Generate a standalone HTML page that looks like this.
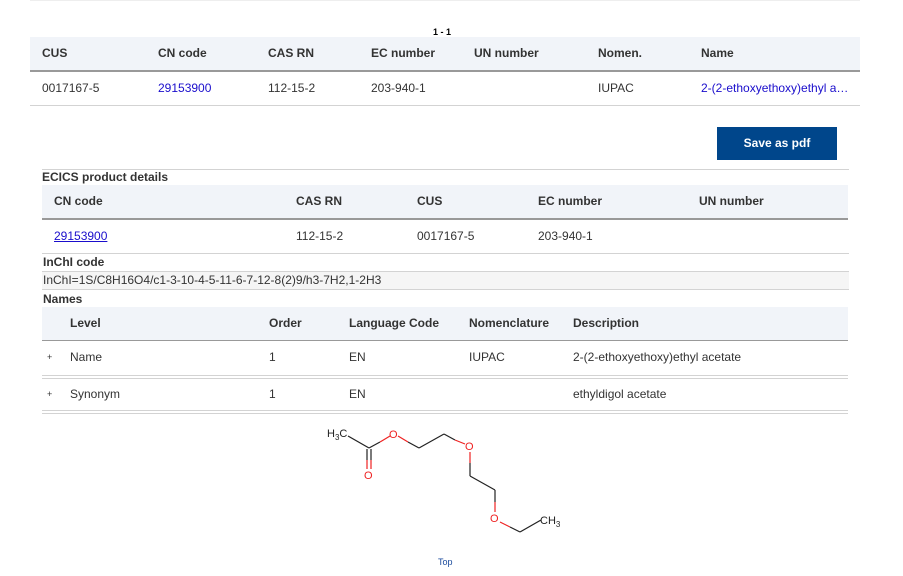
<!DOCTYPE html>
<html><head><meta charset="utf-8"><style>
*{margin:0;padding:0;box-sizing:border-box}
body{width:903px;height:576px;background:#fff;font-family:"Liberation Sans",sans-serif;font-size:12px;color:#333;position:relative;overflow:hidden}
.a{position:absolute;white-space:nowrap;line-height:14px}
.b{font-weight:bold}
.bg{position:absolute;background:#f1f4f9}
.ln{position:absolute;height:1px;background:#d3d3d3}
.lk{color:#1a0dcc}
</style></head><body>
<div class="ln" style="left:30px;top:0;width:830px;background:#eee"></div>
<div class="a b" style="left:433px;top:25px;font-size:9px;color:#000">1 - 1</div>
<div class="bg" style="left:30px;top:37px;width:830px;height:33px"></div>
<div class="ln" style="left:30px;top:70px;width:830px;height:2px;background:#999"></div>
<div class="a b" style="left:42px;top:46px">CUS</div>
<div class="a b" style="left:158px;top:46px">CN code</div>
<div class="a b" style="left:268px;top:46px">CAS RN</div>
<div class="a b" style="left:371px;top:46px">EC number</div>
<div class="a b" style="left:474px;top:46px">UN number</div>
<div class="a b" style="left:598px;top:46px">Nomen.</div>
<div class="a b" style="left:701px;top:46px">Name</div>
<div class="a" style="left:42px;top:81px">0017167-5</div>
<div class="a lk" style="left:158px;top:81px">29153900</div>
<div class="a" style="left:268px;top:81px">112-15-2</div>
<div class="a" style="left:371px;top:81px">203-940-1</div>
<div class="a" style="left:598px;top:81px">IUPAC</div>
<div class="a lk" style="left:701px;top:81px">2-(2-ethoxyethoxy)ethyl a…</div>
<div class="ln" style="left:30px;top:105px;width:830px"></div>
<div class="a b" style="left:717px;top:127px;width:120px;height:33px;background:#00468b;color:#fff;text-align:center;line-height:33px">Save as pdf</div>
<div class="ln" style="left:42px;top:169px;width:807px"></div>
<div class="a b" style="left:42px;top:170px">ECICS product details</div>
<div class="bg" style="left:42px;top:185px;width:806px;height:33px"></div>
<div class="ln" style="left:42px;top:218px;width:806px;height:2px;background:#999"></div>
<div class="a b" style="left:54px;top:194px">CN code</div>
<div class="a b" style="left:296px;top:194px">CAS RN</div>
<div class="a b" style="left:417px;top:194px">CUS</div>
<div class="a b" style="left:538px;top:194px">EC number</div>
<div class="a b" style="left:699px;top:194px">UN number</div>
<div class="a lk" style="left:54px;top:229px;text-decoration:underline">29153900</div>
<div class="a" style="left:296px;top:229px">112-15-2</div>
<div class="a" style="left:417px;top:229px">0017167-5</div>
<div class="a" style="left:538px;top:229px">203-940-1</div>
<div class="ln" style="left:42px;top:253px;width:807px"></div>
<div class="a b" style="left:43px;top:255px">InChI code</div>
<div class="ln" style="left:42px;top:271px;width:807px"></div>
<div style="position:absolute;left:42px;top:272px;width:807px;height:17px;background:#f5f5f5"></div>
<div class="a" style="left:43px;top:273px">InChI=1S/C8H16O4/c1-3-10-4-5-11-6-7-12-8(2)9/h3-7H2,1-2H3</div>
<div class="ln" style="left:42px;top:289px;width:807px"></div>
<div class="a b" style="left:43px;top:292px">Names</div>
<div class="bg" style="left:42px;top:307px;width:806px;height:33px"></div>
<div class="ln" style="left:42px;top:340px;width:806px;background:#999"></div>
<div class="a b" style="left:70px;top:316px">Level</div>
<div class="a b" style="left:269px;top:316px">Order</div>
<div class="a b" style="left:349px;top:316px">Language Code</div>
<div class="a b" style="left:469px;top:316px">Nomenclature</div>
<div class="a b" style="left:573px;top:316px">Description</div>
<div class="a" style="left:47px;top:350px;font-size:9px">+</div>
<div class="a" style="left:70px;top:350px">Name</div>
<div class="a" style="left:269px;top:350px">1</div>
<div class="a" style="left:349px;top:350px">EN</div>
<div class="a" style="left:469px;top:350px">IUPAC</div>
<div class="a" style="left:573px;top:350px">2-(2-ethoxyethoxy)ethyl acetate</div>
<div class="ln" style="left:42px;top:375px;width:806px"></div>
<div class="ln" style="left:42px;top:378px;width:806px"></div>
<div class="a" style="left:47px;top:387px;font-size:9px">+</div>
<div class="a" style="left:70px;top:387px">Synonym</div>
<div class="a" style="left:269px;top:387px">1</div>
<div class="a" style="left:349px;top:387px">EN</div>
<div class="a" style="left:573px;top:387px">ethyldigol acetate</div>
<div class="ln" style="left:42px;top:410px;width:806px"></div>
<div class="ln" style="left:42px;top:413px;width:806px"></div>
<svg style="position:absolute;left:0;top:0" width="903" height="576">
<g stroke-width="1.2" fill="none">
<line x1="348" y1="436" x2="369" y2="448" stroke="#222"/>
<line x1="369" y1="448" x2="380" y2="442" stroke="#222"/>
<line x1="380" y1="442" x2="390" y2="436" stroke="#e22"/>
<line x1="367" y1="449" x2="367" y2="460" stroke="#222"/><line x1="371" y1="449" x2="371" y2="460" stroke="#222"/>
<line x1="367" y1="460" x2="367" y2="469" stroke="#e22"/><line x1="371" y1="460" x2="371" y2="469" stroke="#e22"/>
<line x1="398" y1="436" x2="408" y2="442" stroke="#e22"/>
<line x1="408" y1="442" x2="419" y2="448" stroke="#222"/>
<line x1="419" y1="448" x2="444" y2="434" stroke="#222"/>
<line x1="444" y1="434" x2="455" y2="440" stroke="#222"/>
<line x1="455" y1="440" x2="465" y2="444" stroke="#e22"/>
<line x1="470" y1="452" x2="470" y2="463" stroke="#e22"/>
<line x1="470" y1="463" x2="470" y2="476" stroke="#222"/>
<line x1="470" y1="476" x2="495" y2="490" stroke="#222"/>
<line x1="495" y1="490" x2="495" y2="502" stroke="#222"/>
<line x1="495" y1="502" x2="495" y2="512" stroke="#e22"/>
<line x1="500" y1="522" x2="510" y2="527" stroke="#e22"/>
<line x1="510" y1="527" x2="520" y2="532" stroke="#222"/>
<line x1="520" y1="532" x2="541" y2="520" stroke="#222"/>
</g>
<g font-family="Liberation Sans" font-size="11" fill="#e22">
<text x="389" y="438">O</text><text x="465" y="450">O</text><text x="490" y="522">O</text><text x="364" y="479">O</text>
</g>
<g font-family="Liberation Sans" font-size="11" fill="#222">
<text x="327" y="437">H<tspan font-size="8" dy="3">3</tspan><tspan dy="-3">C</tspan></text>
<text x="540" y="524">CH<tspan font-size="8" dy="3">3</tspan></text>
</g>
</svg>
<div class="a" style="left:438px;top:555px;font-size:9px;color:#1a4a9c">Top</div>
</body></html>
